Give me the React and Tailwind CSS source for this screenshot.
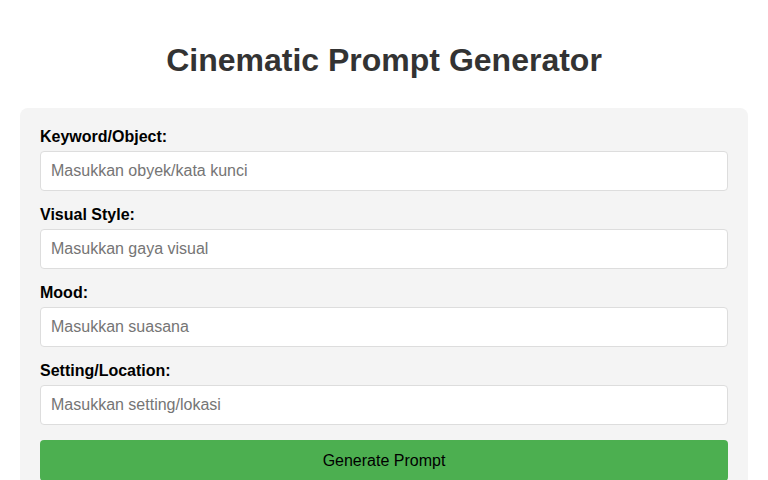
import { useState } from "react"

const fields = [
  { id: "keyword", label: "Keyword/Object:", placeholder: "Masukkan obyek/kata kunci" },
  { id: "style", label: "Visual Style:", placeholder: "Masukkan gaya visual" },
  { id: "mood", label: "Mood:", placeholder: "Masukkan suasana" },
  { id: "setting", label: "Setting/Location:", placeholder: "Masukkan setting/lokasi" },
]

export default function App() {
  const [values, setValues] = useState({})

  return (
    <div className="min-h-screen bg-white px-5 pt-5 font-['Liberation_Sans',Arial,sans-serif]">
      <h1 className="mt-[22px] mb-[29px] text-center text-[32px] leading-[37px] font-bold text-[#333]">
        Cinematic Prompt Generator
      </h1>

      <div className="rounded-lg bg-[#f4f4f4] p-5">
        {fields.map((f) => (
          <div key={f.id}>
            <label htmlFor={f.id} className="mb-[5px] block text-base leading-[18px] font-bold text-black">
              {f.label}
            </label>
            <input
              id={f.id}
              type="text"
              placeholder={f.placeholder}
              value={values[f.id] || ""}
              onChange={(e) => setValues({ ...values, [f.id]: e.target.value })}
              className="mb-[15px] block h-10 w-full rounded border border-[#ddd] bg-white px-[10px] text-base leading-[18px] text-black outline-none placeholder:text-[#757575]"
            />
          </div>
        ))}
        <button className="block h-[41px] w-full rounded bg-[#4caf50] text-base leading-[18px] text-black">
          Generate Prompt
        </button>
      </div>
    </div>
  )
}
